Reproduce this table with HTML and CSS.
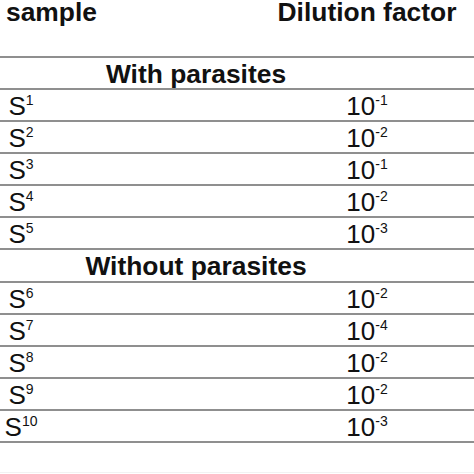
FILE: index.html
```html
<!DOCTYPE html>
<html>
<head>
<meta charset="utf-8">
<link rel="stylesheet" href="styles.css">
</head>
<body>
<div class="page">
  <div class="head">
    <div class="head-left">sample</div>
    <div class="head-right">Dilution factor</div>
  </div>
  <div class="table">
    <div class="row section"><span>With parasites</span></div>
    <div class="row"><div class="lab">S<sup>1</sup></div><div></div><div class="val">10<sup>-1</sup></div></div>
    <div class="row"><div class="lab">S<sup>2</sup></div><div></div><div class="val">10<sup>-2</sup></div></div>
    <div class="row"><div class="lab">S<sup>3</sup></div><div></div><div class="val">10<sup>-1</sup></div></div>
    <div class="row"><div class="lab">S<sup>4</sup></div><div></div><div class="val">10<sup>-2</sup></div></div>
    <div class="row"><div class="lab">S<sup>5</sup></div><div></div><div class="val">10<sup>-3</sup></div></div>
    <div class="row section"><span>Without parasites</span></div>
    <div class="row"><div class="lab">S<sup>6</sup></div><div></div><div class="val">10<sup>-2</sup></div></div>
    <div class="row"><div class="lab">S<sup>7</sup></div><div></div><div class="val">10<sup>-4</sup></div></div>
    <div class="row"><div class="lab">S<sup>8</sup></div><div></div><div class="val">10<sup>-2</sup></div></div>
    <div class="row"><div class="lab">S<sup>9</sup></div><div></div><div class="val">10<sup>-2</sup></div></div>
    <div class="row"><div class="lab">S<sup>10</sup></div><div></div><div class="val">10<sup>-3</sup></div></div>
  </div>
  <div class="foot"></div>
</div>
</body>
</html>
```

FILE: styles.css
```css
html, body {
  margin: 0;
  padding: 0;
  background: #ffffff;
}
.page {
  width: 474px;
  height: 474px;
  overflow: hidden;
  font-family: "Liberation Sans", Arial, sans-serif;
  color: #111111;
  display: flex;
  flex-direction: column;
}
.head {
  height: 56px;
  display: grid;
  grid-template-columns: 260px 214px;
  font-weight: bold;
  font-size: 26.4px;
  line-height: 25px;
}
.head-left {
  padding-left: 6px;
}
.head-right {
  text-align: center;
}
.table {
  border-top: 2px solid #8f8f8f;
}
.row {
  height: 30.08px;
  border-bottom: 2px solid #8f8f8f;
  display: grid;
  grid-template-columns: 42px 218px 214px;
  font-size: 26px;
  line-height: 32px;
  white-space: nowrap;
}
.section {
  display: block;
  padding-right: 82px;
  text-align: center;
  font-weight: bold;
  font-size: 26.4px;
}
.lab, .val {
  text-align: center;
}
sup {
  font-size: 14px;
  line-height: 0;
  vertical-align: super;
}
.foot {
  margin-top: 29px;
  height: 1px;
  background: #f2f2f2;
}
```
